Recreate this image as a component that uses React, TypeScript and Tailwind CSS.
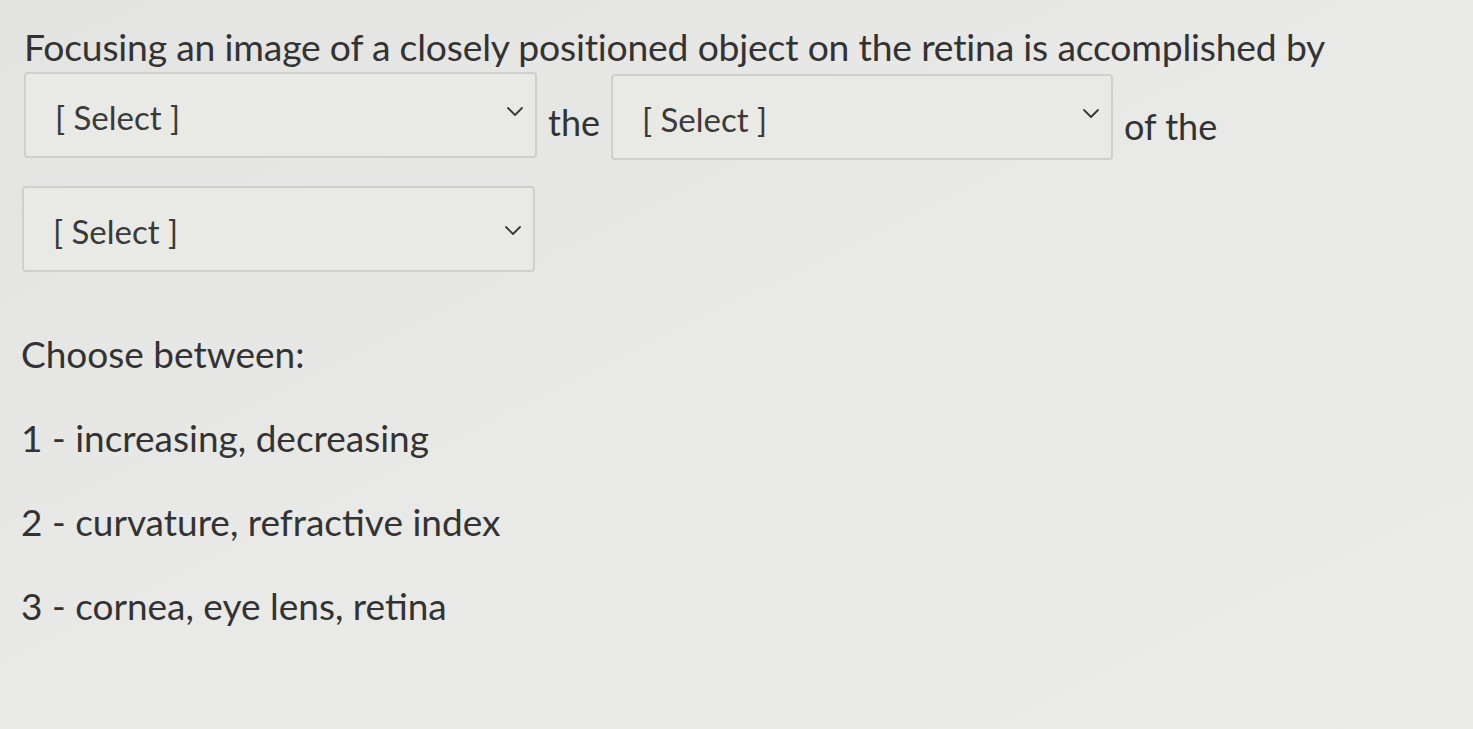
import React from "react";

function Chevron() {
  return (
    <svg width="18" height="11" viewBox="0 0 18 11" fill="none">
      <path d="M2 2 L9 9 L16 2" stroke="#383838" strokeWidth="1.8" strokeLinecap="round" strokeLinejoin="round" />
    </svg>
  );
}

function Sel({ w, chevTop = false }: { w: string; chevTop?: boolean }) {
  return (
    <div
      className={`${w} h-[86px] rounded-[4px] border-2 border-[#cfcfcc] bg-[#e9e9e6] flex items-start justify-between pl-[29px] pr-[11px] pt-[23px]`}
    >
      <span className="text-[33px] leading-[40px] text-[#3a3a3a]">[ Select ]</span>
      <span className={chevTop ? "mt-[9px]" : "mt-[14px]"}>
        <Chevron />
      </span>
    </div>
  );
}

export default function App() {
  return (
    <div
      className="w-[1473px] h-[729px] overflow-hidden bg-gradient-to-br from-[#e3e3e1] via-[#e9e9e7] to-[#ebebe9] text-[#333333] pl-[24px] pt-[24px]"
      style={{ fontFamily: "Lato, 'Open Sans', sans-serif" }}
    >
      <div className="text-[37.3px] leading-[46px] tracking-[-0.2px]">
        Focusing an image of a closely positioned object on the retina is accomplished by
      </div>
      <div className="flex items-start mt-[2px]">
        <Sel w="w-[513px]" chevTop />
        <span className="text-[36px] leading-[44px] mx-[11px] mt-[28px]">the</span>
        <div className="mt-[2px]">
          <Sel w="w-[502px]" chevTop />
        </div>
        <span className="text-[36px] leading-[44px] ml-[11px] mt-[32px]">of the</span>
      </div>
      <div className="mt-[26px] -ml-[2px]">
        <Sel w="w-[513px]" />
      </div>
      <div className="-ml-[3px] mt-[60px] flex flex-col gap-[40px] text-[37px] leading-[44px]">
        <div>Choose between:</div>
        <div>1 - increasing, decreasing</div>
        <div>2 - curvature, refractive index</div>
        <div>3 - cornea, eye lens, retina</div>
      </div>
    </div>
  );
}
